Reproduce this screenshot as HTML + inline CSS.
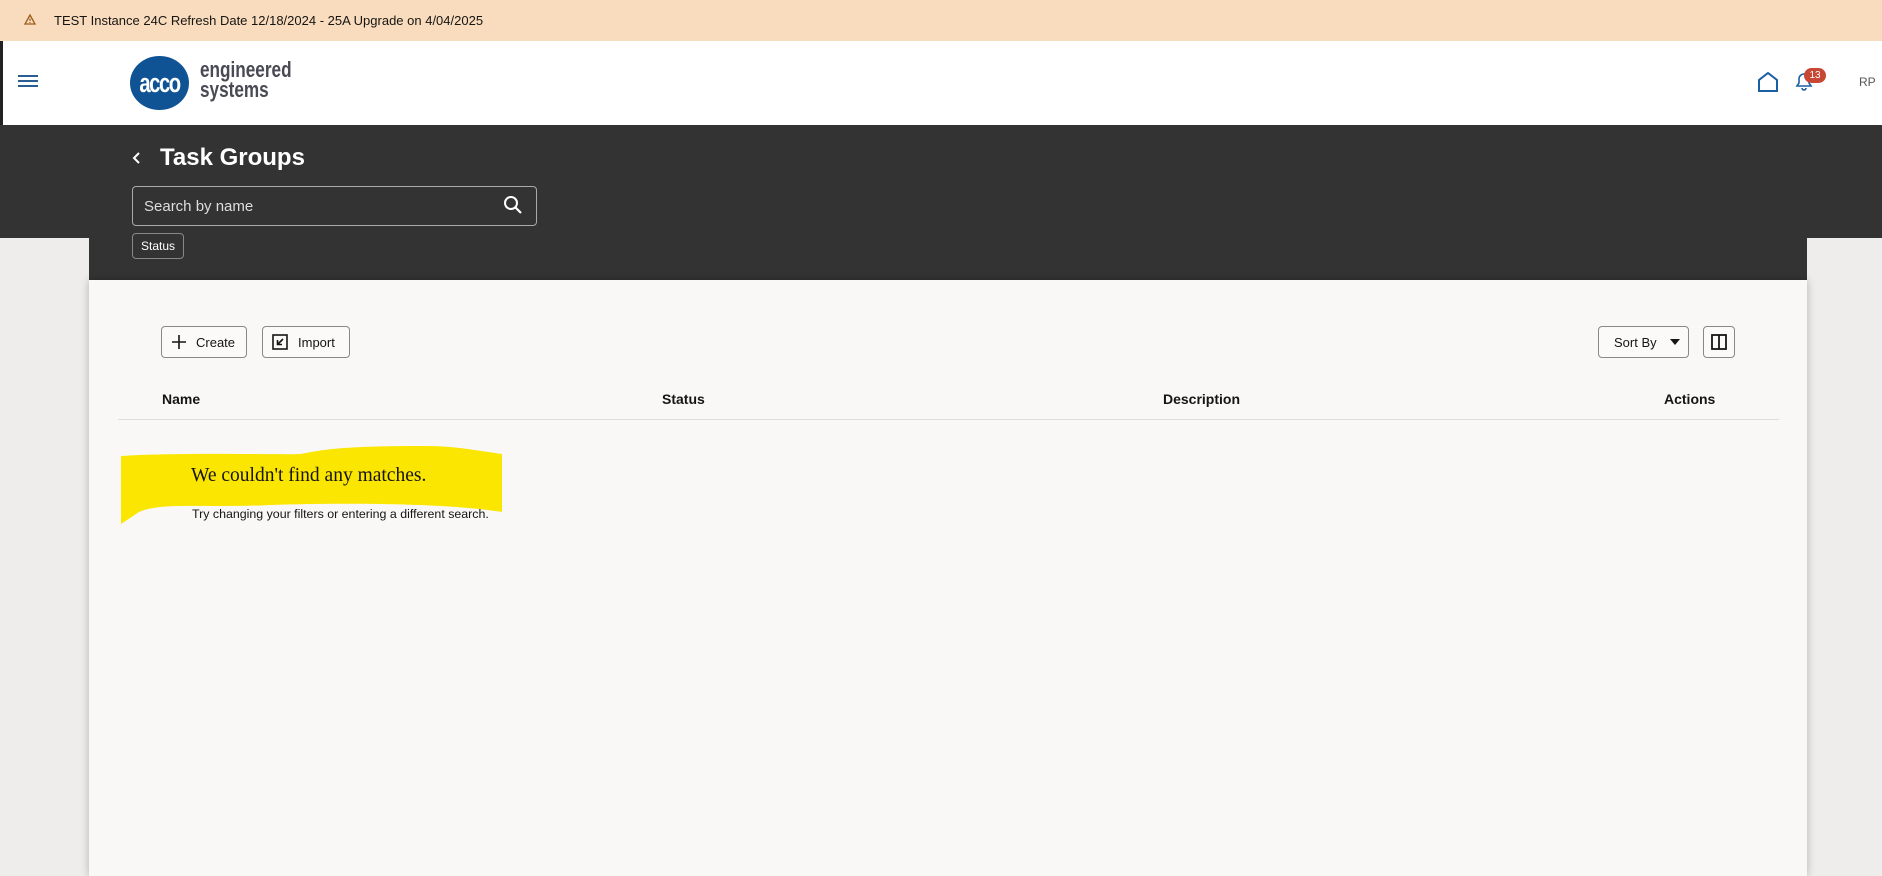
<!DOCTYPE html>
<html><head><style>
*{margin:0;padding:0;box-sizing:border-box}
body{width:1882px;height:876px;overflow:hidden;background:#eeedeb;font-family:"Liberation Sans",sans-serif;position:relative}
.abs{position:absolute}
.btn{position:absolute;border:1px solid #8a8886;border-radius:4px;background:#fbfaf9;font-size:13px;color:#161513;display:flex;align-items:center}
.th{position:absolute;top:391px;font-size:14px;font-weight:bold;color:#161513}
</style></head><body>
<div class="abs" style="left:0;top:0;width:1882px;height:41px;background:#f9dcbd"></div>
<svg class="abs" style="left:24px;top:14px" width="12" height="11" viewBox="0 0 12 11"><path d="M6 1L11 10H1Z" fill="none" stroke="#9a5a1a" stroke-width="1.3"/><path d="M6 4.5v2.5M6 8v1" stroke="#9a5a1a" stroke-width="1.2"/></svg>
<div class="abs" style="left:54px;top:13px;font-size:13px;color:#161513">TEST Instance 24C Refresh Date 12/18/2024 - 25A Upgrade on 4/04/2025</div>
<div class="abs" style="left:0;top:41px;width:1882px;height:84px;background:#fff;border-left:3px solid #222"></div>
<div class="abs" style="left:18px;top:75px;width:20px;height:2px;background:#2a5e93;box-shadow:0 5px 0 #2a5e93,0 10px 0 #2a5e93"></div>
<div class="abs" style="left:130px;top:56px;width:59px;height:54px;border-radius:50%;background:#0f5394"></div>
<div class="abs" style="left:130px;top:56px;width:59px;height:54px;color:#fff;font-size:27px;font-weight:bold;letter-spacing:-2px;display:flex;align-items:center;justify-content:center;transform:scaleX(0.75)">acco</div>
<div class="abs" style="left:200px;top:60px;font-size:22px;font-weight:bold;color:#4a4a55;line-height:20px;transform:scaleX(0.78);transform-origin:left">engineered<br>systems</div>
<svg class="abs" style="left:1757px;top:72px" width="22" height="20" viewBox="0 0 22 20"><path d="M2 19V8L11 1L20 8V19Z" fill="none" stroke="#1b5fa3" stroke-width="2"/></svg>
<svg class="abs" style="left:1794px;top:70px" width="20" height="22" viewBox="0 0 20 22"><path d="M3 16h14l-2-3V9a5 5 0 0 0-10 0v4Z M8 18a2 2 0 0 0 4 0" fill="none" stroke="#1b5fa3" stroke-width="1.6"/></svg>
<div class="abs" style="left:1804px;top:68px;width:22px;height:15px;border-radius:8px;background:#c74634;color:#fff;font-size:10px;text-align:center;line-height:15px">13</div>
<div class="abs" style="left:1859px;top:75px;font-size:12px;color:#555">RP</div>
<div class="abs" style="left:0;top:125px;width:1882px;height:113px;background:#333"></div>
<div class="abs" style="left:89px;top:238px;width:1718px;height:42px;background:#333"></div>
<div class="abs" style="left:89px;top:280px;width:1718px;height:596px;background:#f9f8f6;box-shadow:0 0 8px rgba(0,0,0,.25)"></div>
<svg class="abs" style="left:131px;top:151px" width="10" height="14" viewBox="0 0 10 14"><path d="M8 2L3 7L8 12" fill="none" stroke="#fff" stroke-width="2"/></svg>
<div class="abs" style="left:160px;top:144px;font-size:24px;font-weight:bold;color:#fff">Task Groups</div>
<div class="abs" style="left:132px;top:186px;width:405px;height:40px;border:1px solid #aaa;border-radius:4px"></div>
<div class="abs" style="left:144px;top:198px;font-size:15px;color:#ddd">Search by name</div>
<svg class="abs" style="left:503px;top:195px" width="20" height="20" viewBox="0 0 20 20"><circle cx="8" cy="8" r="6" fill="none" stroke="#fff" stroke-width="2"/><path d="M12.5 12.5L18 18" stroke="#fff" stroke-width="2.2"/></svg>
<div class="abs" style="left:132px;top:233px;width:52px;height:26px;border:1px solid #888;border-radius:4px;color:#fff;font-size:12px;line-height:24px;text-align:center">Status</div>
<div class="btn" style="left:161px;top:326px;width:86px;height:32px"><svg style="margin-left:9px;margin-right:9px" width="16" height="16"><path d="M8 1v14M1 8h14" stroke="#161513" stroke-width="1.6"/></svg>Create</div>
<div class="btn" style="left:262px;top:326px;width:88px;height:32px"><svg style="margin-left:9px;margin-right:10px" width="16" height="16"><rect x="1" y="1" width="14" height="14" fill="none" stroke="#161513" stroke-width="1.6"/><path d="M11 5L5.5 10.5M5.5 6v4.5H10" fill="none" stroke="#161513" stroke-width="1.6"/></svg>Import</div>
<div class="btn" style="left:1598px;top:326px;width:91px;height:32px;padding-left:15px">Sort By<svg style="margin-left:13px" width="10" height="6"><path d="M0 0h10L5 6Z" fill="#161513"/></svg></div>
<div class="btn" style="left:1703px;top:326px;width:32px;height:32px;justify-content:center"><svg width="16" height="16"><rect x="1" y="1" width="14" height="14" fill="none" stroke="#161513" stroke-width="1.8"/><path d="M8 1v14" stroke="#161513" stroke-width="1.8"/></svg></div>
<div class="th" style="left:162px">Name</div>
<div class="th" style="left:662px">Status</div>
<div class="th" style="left:1163px">Description</div>
<div class="th" style="left:1664px">Actions</div>
<div class="abs" style="left:118px;top:419px;width:1661px;height:1px;background:#ddd"></div>
<svg class="abs" style="left:121px;top:446px" width="381" height="80" viewBox="0 0 381 80"><path d="M0 10C60 6 160 9 180 8C200 4 220 0 300 0C330 0 340 2 381 8V66C320 56 200 57 150 59C80 62 40 56 18 66L0 78Z" fill="#fae600"/></svg>
<div class="abs" style="left:191px;top:465px;font-family:'Liberation Serif',serif;font-size:19.5px;color:#161513">We couldn't find any matches.</div>
<div class="abs" style="left:192px;top:507px;font-size:12.4px;color:#161513">Try changing your filters or entering a different search.</div>
</body></html>
